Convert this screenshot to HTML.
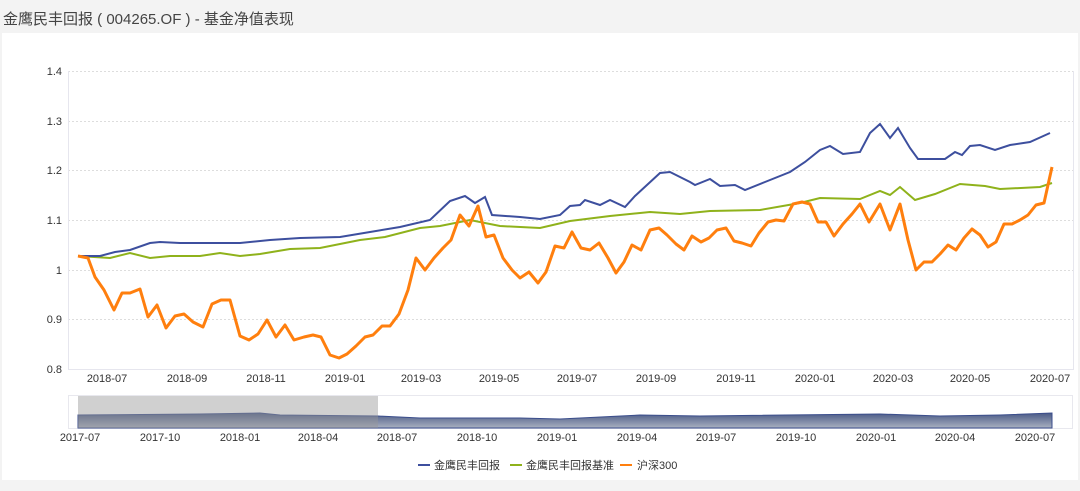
<!DOCTYPE html>
<html><head><meta charset="utf-8"><style>
body{margin:0;width:1080px;height:491px;background:#f3f3f3;font-family:"Liberation Sans","Noto Sans CJK SC",sans-serif;overflow:hidden}
.t{position:absolute;left:3px;top:8px;font-size:15px;color:#444}
.p{position:absolute;left:2px;top:33px;width:1076px;height:447px;background:#fff}
</style></head><body>
<div class="t">金鹰民丰回报 ( 004265.OF ) - 基金净值表现</div>
<div class="p"></div>
<svg width="1080" height="491" style="position:absolute;left:0;top:0" font-family="Liberation Sans, Noto Sans CJK SC, sans-serif">
<defs><linearGradient id="g" x1="0" y1="0" x2="0" y2="1"><stop offset="0" stop-color="#4a5a86"/><stop offset="1" stop-color="#a9b0c0"/></linearGradient></defs>
<g stroke="#ddd" stroke-dasharray="2,2" stroke-width="1">
<line x1="68" y1="71.5" x2="1073" y2="71.5"/><line x1="68" y1="121.5" x2="1073" y2="121.5"/><line x1="68" y1="170.5" x2="1073" y2="170.5"/><line x1="68" y1="220.5" x2="1073" y2="220.5"/><line x1="68" y1="270.5" x2="1073" y2="270.5"/><line x1="68" y1="319.5" x2="1073" y2="319.5"/>
</g>
<path d="M68.5 71V369.5H1073.5V71" fill="none" stroke="#e6e6ee"/>
<g font-size="11" fill="#333" text-anchor="end">
<text x="62" y="75">1.4</text><text x="62" y="125">1.3</text><text x="62" y="174">1.2</text><text x="62" y="224">1.1</text><text x="62" y="274">1</text><text x="62" y="323">0.9</text><text x="62" y="373">0.8</text></g>
<g font-size="11" fill="#333" text-anchor="middle">
<text x="107" y="382">2018-07</text><text x="187" y="382">2018-09</text><text x="266" y="382">2018-11</text><text x="345" y="382">2019-01</text><text x="421" y="382">2019-03</text><text x="499" y="382">2019-05</text><text x="577" y="382">2019-07</text><text x="656" y="382">2019-09</text><text x="736" y="382">2019-11</text><text x="815" y="382">2020-01</text><text x="893" y="382">2020-03</text><text x="970" y="382">2020-05</text><text x="1050" y="382">2020-07</text>
<text x="80" y="441">2017-07</text><text x="160" y="441">2017-10</text><text x="240" y="441">2018-01</text><text x="318" y="441">2018-04</text><text x="397" y="441">2018-07</text><text x="477" y="441">2018-10</text><text x="557" y="441">2019-01</text><text x="637" y="441">2019-04</text><text x="716" y="441">2019-07</text><text x="796" y="441">2019-10</text><text x="876" y="441">2020-01</text><text x="955" y="441">2020-04</text><text x="1035" y="441">2020-07</text></g>
<rect x="68.5" y="395.5" width="1004" height="33" fill="none" stroke="#e8e8ee"/>
<path d="M78 415 L200 414 L260 413 L280 415 L378 416 L420 418 L520 418 L560 419 L640 415 L700 416 L880 414 L940 416 L1000 415 L1052 413 V428 H78Z" fill="url(#g)" stroke="#3b4e8c" stroke-width="1"/>
<rect x="78" y="396" width="300" height="32" fill="rgba(150,150,150,0.45)"/>
<polyline fill="none" stroke="#8fb21b" stroke-width="2" points="78,256 110,258 130,253 150,258 170,256 200,256 220,253 240,256 260,254 290,249 320,248 360,240 385,237 420,228 440,226 470,220 500,226 540,228 570,221 610,216 650,212 680,214 710,211 760,210 800,203 820,198 860,199 880,191 890,195 900,187 915,200 935,194 960,184 985,186 1000,189 1040,187 1052,183"/>
<polyline fill="none" stroke="#3d4f9e" stroke-width="2" points="78,256 100,256 115,252 130,250 150,243 160,242 180,243 200,243 240,243 270,240 300,238 340,237 370,232 400,227 430,220 450,201 465,196 475,203 485,197 492,215 520,217 540,219 560,215 570,206 580,205 585,200 600,205 610,200 625,207 635,196 660,173 670,172 690,182 695,185 710,179 720,186 735,185 745,190 765,182 790,172 805,162 820,150 830,146 843,154 860,152 870,133 880,124 890,138 898,128 910,148 918,159 945,159 955,152 962,155 970,146 980,145 995,150 1010,145 1030,142 1050,133"/>
<polyline fill="none" stroke="#ff7f0e" stroke-width="3" stroke-linejoin="round" points="78,256 88,258 95,277 104,290 114,310 122,293 130,293 140,289 148,317 157,305 166,328 175,316 184,314 193,322 203,327 212,304 221,300 230,300 240,336 249,340 258,334 267,320 276,337 285,325 294,340 304,337 313,335 321,337 330,355 339,358 347,354 356,346 365,337 373,335 382,326 390,326 399,314 408,290 416,258 425,270 434,258 443,248 451,240 460,215 469,226 478,206 486,237 494,235 503,258 512,270 520,278 529,272 538,283 546,272 555,246 564,248 572,232 581,248 590,250 599,243 608,258 616,273 624,262 632,245 641,250 650,230 659,228 667,235 676,244 684,250 692,236 701,242 709,238 717,230 726,228 734,241 742,243 751,246 759,233 768,222 776,220 784,221 793,204 802,202 810,204 818,222 826,222 834,236 843,224 852,214 860,204 869,222 880,204 890,230 900,204 908,240 916,270 924,262 932,262 940,254 948,245 956,250 964,238 972,229 980,235 988,247 996,242 1004,224 1012,224 1020,220 1028,215 1036,205 1044,203 1052,167"/>
<g font-size="11" fill="#333">
<line x1="418" y1="465" x2="430" y2="465" stroke="#3d4f9e" stroke-width="2"/><text x="434" y="469">金鹰民丰回报</text>
<line x1="510" y1="465" x2="522" y2="465" stroke="#8fb21b" stroke-width="2"/><text x="526" y="469">金鹰民丰回报基准</text>
<line x1="620" y1="465" x2="632" y2="465" stroke="#ff7f0e" stroke-width="2"/><text x="637" y="469">沪深300</text>
</g>
</svg>
</body></html>
